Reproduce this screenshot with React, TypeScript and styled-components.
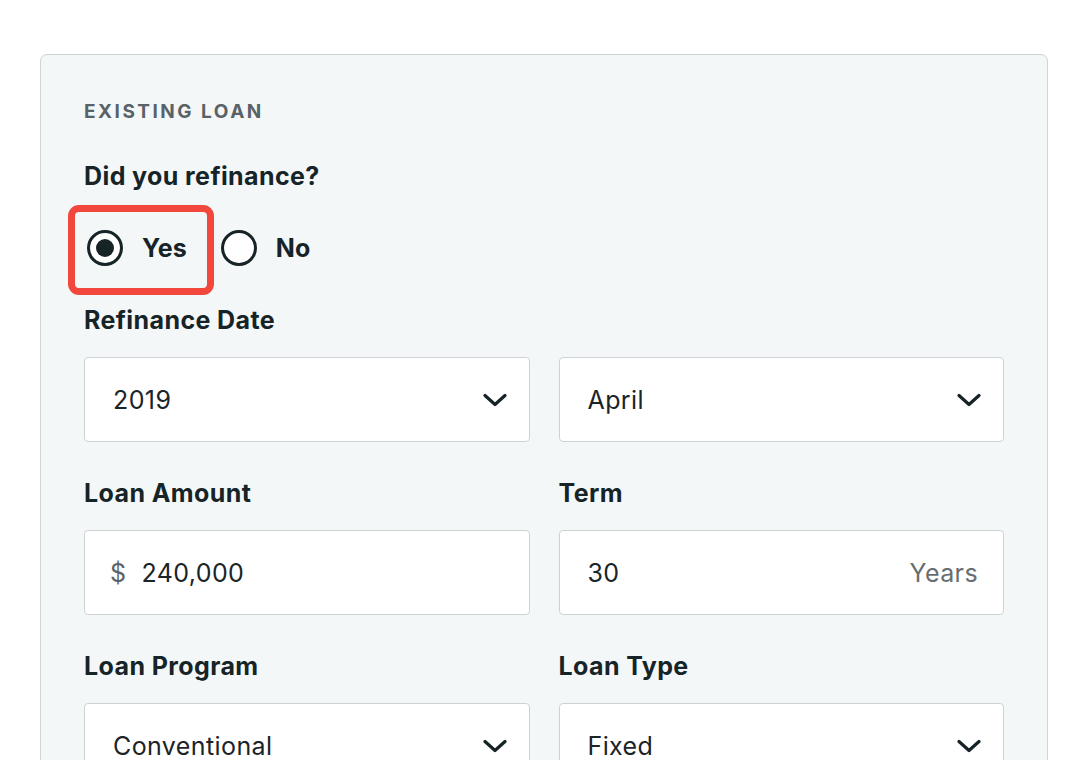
import React from "react";
import styled, { createGlobalStyle } from "styled-components";

const Global = createGlobalStyle`
  html, body { margin: 0; padding: 0; background: #ffffff; }
  body { font-family: Inter, "Noto Sans", "Liberation Sans", sans-serif; color: #162428; }
  * { box-sizing: border-box; }
`;

const Page = styled.div`
  padding: 54px 33px 0 40px;
  height: 760px;
  overflow: hidden;
`;

const Card = styled.section`
  background: #f3f7f7;
  border: 1px solid #cdd4d4;
  border-radius: 7px;
  padding: 45px 43px 60px 43px;
  min-height: 800px;
`;

const Eyebrow = styled.h2`
  margin: 0;
  font-size: 19px;
  line-height: 24px;
  font-weight: 700;
  letter-spacing: 2.5px;
  text-transform: uppercase;
  color: #596266;
`;

const Question = styled.div`
  margin-top: 37px;
  font-size: 25px;
  line-height: 30px;
  font-weight: 700;
  letter-spacing: 0.4px;
  color: #162428;
`;

const RadioRow = styled.div`
  margin-top: 32px;
  height: 50px;
  display: flex;
  align-items: stretch;
  gap: 34px;
  padding-left: 3px;
`;

const RadioOption = styled.label`
  position: relative;
  display: flex;
  align-items: center;
  gap: 19px;
  font-size: 25px;
  font-weight: 700;
  letter-spacing: 0.1px;
  color: #162428;
  cursor: pointer;
`;

const RadioCircle = styled.span<{ $checked?: boolean }>`
  width: 36px;
  height: 36px;
  border-radius: 50%;
  border: 3px solid #162428;
  background: #ffffff;
  display: flex;
  align-items: center;
  justify-content: center;
  &::after {
    content: "";
    width: 18px;
    height: 18px;
    border-radius: 50%;
    background: #162428;
    display: ${(p) => (p.$checked ? "block" : "none")};
  }
`;

const Highlight = styled.span`
  position: absolute;
  left: -19px;
  top: -18px;
  width: 146px;
  height: 90px;
  border: 7px solid #f2473c;
  border-radius: 11px;
  pointer-events: none;
`;

const Grid = styled.div<{ $top?: number }>`
  margin-top: ${(p) => p.$top ?? 0}px;
  display: grid;
  grid-template-columns: 1fr 1fr;
  column-gap: 29px;
  row-gap: 36px;
`;

const Field = styled.div<{ $wide?: boolean }>`
  display: flex;
  flex-direction: column;
  grid-column: ${(p) => (p.$wide ? "1 / 3" : "auto")};
`;

const FieldLabel = styled.div`
  font-size: 25px;
  line-height: 30px;
  font-weight: 700;
  letter-spacing: 0.4px;
  color: #162428;
  margin-bottom: 22px;
`;

const Box = styled.div`
  height: 85px;
  background: #ffffff;
  border: 1px solid #cdd3d4;
  border-radius: 4px;
  display: flex;
  align-items: center;
  padding: 0 22px 0 28px;
  font-size: 25px;
  letter-spacing: 0.4px;
  color: #1b2427;
`;

const Value = styled.span`
  flex: 1;
`;

const Prefix = styled.span`
  color: #5d6468;
  margin-left: -3px;
  margin-right: 15px;
`;

const Suffix = styled.span`
  color: #676e72;
  margin-right: 3px;
`;

const Chevron = () => (
  <svg width="24" height="14" viewBox="0 0 24 14" fill="none">
    <path d="M2 2.5 L12 11.5 L22 2.5" stroke="#162428" strokeWidth="3.2" strokeLinecap="round" strokeLinejoin="round" />
  </svg>
);

const Select = ({ value }: { value: string }) => (
  <Box>
    <Value>{value}</Value>
    <Chevron />
  </Box>
);

export default function App() {
  return (
    <>
      <Global />
      <Page>
        <Card>
          <Eyebrow>Existing Loan</Eyebrow>
          <Question>Did you refinance?</Question>
          <RadioRow>
            <RadioOption>
              <Highlight />
              <RadioCircle $checked />
              Yes
            </RadioOption>
            <RadioOption>
              <RadioCircle />
              No
            </RadioOption>
          </RadioRow>
          <Grid $top={32}>
            <Field $wide>
              <FieldLabel>Refinance Date</FieldLabel>
              <Grid>
                <Select value="2019" />
                <Select value="April" />
              </Grid>
            </Field>
            <Field>
              <FieldLabel>Loan Amount</FieldLabel>
              <Box>
                <Prefix>$</Prefix>
                <Value>240,000</Value>
              </Box>
            </Field>
            <Field>
              <FieldLabel>Term</FieldLabel>
              <Box>
                <Value>30</Value>
                <Suffix>Years</Suffix>
              </Box>
            </Field>
            <Field>
              <FieldLabel>Loan Program</FieldLabel>
              <Select value="Conventional" />
            </Field>
            <Field>
              <FieldLabel>Loan Type</FieldLabel>
              <Select value="Fixed" />
            </Field>
          </Grid>
        </Card>
      </Page>
    </>
  );
}
